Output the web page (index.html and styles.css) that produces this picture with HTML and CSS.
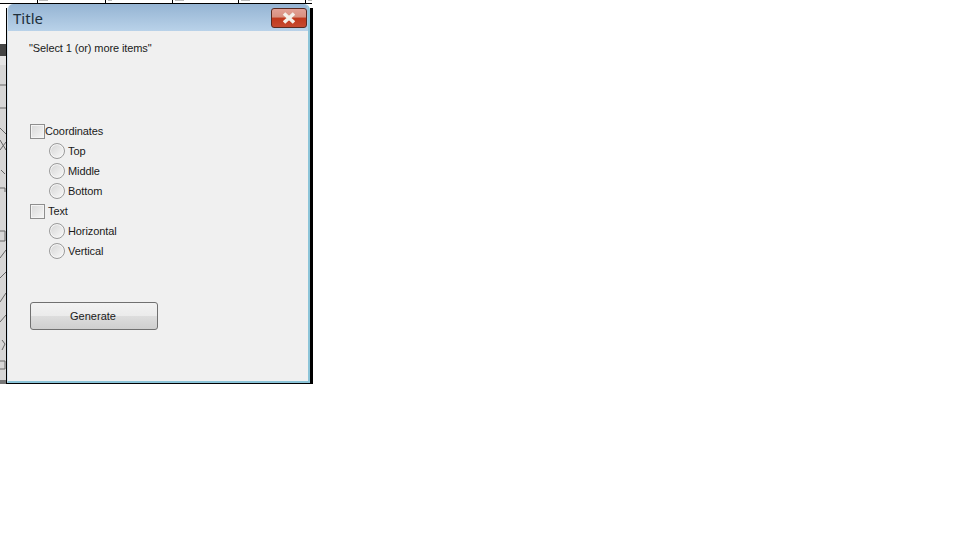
FILE: index.html
```html
<!DOCTYPE html>
<html lang="en">
<head>
    <meta charset="UTF-8">
    <title>Title</title>
    <link rel="stylesheet" href="styles.css">
</head>
<body>
    <div class="desktop">
        <!-- bits of the app behind the dialog -->
        <svg class="backdrop" width="314" height="385" viewBox="0 0 314 385">
            <path d="M0 3.5H312" stroke="#000" fill="none"/>
            <path d="M37.5 0V3M105.5 0V3M172.5 0V3M238.5 0V3M305.5 0V3" stroke="#000" fill="none"/>
            <path d="M39 0H48M108 0H112M175 0H184M241 0H250M308 0H312" stroke="#777" fill="none"/>
            <rect x="0" y="44" width="6" height="12" fill="#444"/>
            <rect x="0" y="56" width="6" height="9" fill="#e4e4e4"/>
            <rect x="0" y="65" width="6" height="315" fill="#d6d6d6"/>
            <rect x="0" y="380" width="6" height="4" fill="#777"/>
            <path d="M0 85H6M0 108H6M0 128L6 134M0 140L6 150M0 150L6 142M1 170L5 174M0 188H5V192M0 231H5V241H0M0 258L6 250M0 278L6 272M0 302L6 293M0 322L6 315M2 340L5 344L2 350M0 361H5V369H0" stroke="#666" fill="none"/>
            <rect x="6" y="8" width="1" height="376" fill="#000"/>
            <rect x="310" y="8" width="3" height="376" fill="#000"/>
            <rect x="6" y="383" width="307" height="1" fill="#000"/>
        </svg>

        <div class="window">
            <div class="titlebar">
                <span class="title">Title</span>
                <button class="close">
                    <svg width="16" height="12" viewBox="0 0 16 12">
                        <path d="M3 1.5L13 10.5M13 1.5L3 10.5" stroke="#f4f0ea" stroke-width="3.6" fill="none"/>
                    </svg>
                </button>
            </div>
            <div class="content">
                <p class="prompt">"Select 1 (or) more items"</p>
                <div class="options">
                    <label class="row">
                        <span class="check"></span>
                        <span>Coordinates</span>
                    </label>
                    <label class="row sub"><span class="radio"></span>Top</label>
                    <label class="row sub"><span class="radio"></span>Middle</label>
                    <label class="row sub"><span class="radio"></span>Bottom</label>
                    <label class="row">
                        <span class="check"></span>
                        <span class="loose">Text</span>
                    </label>
                    <label class="row sub"><span class="radio"></span>Horizontal</label>
                    <label class="row sub"><span class="radio"></span>Vertical</label>
                </div>
                <button class="generate">Generate</button>
            </div>
        </div>
    </div>
</body>
</html>
```

FILE: styles.css
```css
body {
    margin: 0;
    background: #fff;
    font-family: "Liberation Sans", Arial, sans-serif;
    font-size: 11px;
    letter-spacing: -0.1px;
    color: #1a1a1a;
}
.desktop {
    position: relative;
    width: 960px;
    height: 540px;
    overflow: hidden;
}
.backdrop {
    position: absolute;
    top: 0;
    left: 0;
}
.window {
    position: absolute;
    top: 4px;
    left: 7px;
    width: 303px;
    height: 379px;
    box-sizing: border-box;
    display: flex;
    flex-direction: column;
    background: #f0f0f0;
    border-right: 2px solid #8cc4d8;
    border-bottom: 2px solid #8cc4d8;
    border-left: 1px solid #d5e3ee;
    border-radius: 6px 6px 0 0;
    overflow: hidden;
}
.titlebar {
    height: 27px;
    flex: none;
    display: flex;
    align-items: center;
    justify-content: space-between;
    padding: 0 1px 0 5px;
    background: linear-gradient(to bottom, #95b4d3 0%, #b9d2e9 100%);
}
.title {
    font-family: "Noto Sans", sans-serif;
    font-size: 15px;
    letter-spacing: 0;
    color: #20303c;
}
.close {
    width: 36px;
    height: 20px;
    padding: 0;
    display: flex;
    align-items: center;
    justify-content: center;
    border: 1px solid #5a2a20;
    border-radius: 3px;
    background: linear-gradient(to bottom, #e2a095 0%, #d8907f 45%, #c0381c 50%, #c64a30 100%);
}
.content {
    padding: 9px 0 0 21px;
}
.prompt {
    margin: 0;
    line-height: 16px;
}
.options {
    margin-top: 65px;
}
.row {
    display: flex;
    align-items: center;
    height: 20px;
    margin-left: 1px;
}
.row.sub {
    margin-left: 20px;
    gap: 3px;
}
.check {
    width: 13px;
    height: 13px;
    flex: none;
    border: 1px solid #8e8e8e;
    box-shadow: inset 0 0 0 1px #f4f4f4;
    background: linear-gradient(135deg, #d8d8d8 0%, #f6f6f6 100%);
}
.loose {
    margin-left: 3px;
}
.radio {
    width: 14px;
    height: 14px;
    flex: none;
    border: 1px solid #9a9a9a;
    border-radius: 50%;
    box-shadow: inset 0 0 0 1px #f6f6f6;
    background: linear-gradient(135deg, #d4d4d4 0%, #fafafa 100%);
}
.generate {
    display: block;
    width: 128px;
    height: 28px;
    margin: 41px 0 0 1px;
    padding: 0 2px 0 0;
    border: 1px solid #707070;
    border-radius: 3px;
    background: linear-gradient(to bottom, #f2f2f2 0%, #ebebeb 50%, #dddddd 50%, #cfcfcf 100%);
    font: inherit;
    color: inherit;
}
```
